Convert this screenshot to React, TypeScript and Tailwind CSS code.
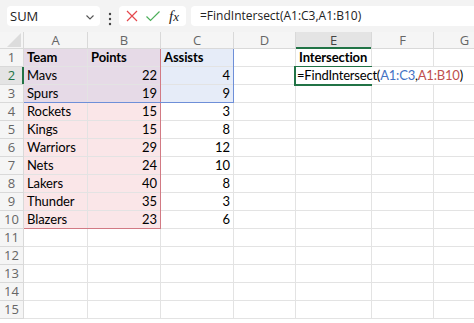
import React from "react";

const colW = [24, 64, 73, 73, 62, 76, 62, 62];
const letters = ["", "A", "B", "C", "D", "E", "F", "G"];

type Cell = { t?: string; right?: boolean; bold?: boolean };

const data: Cell[][] = [
  [{ t: "Team", bold: true }, { t: "Points", bold: true }, { t: "Assists", bold: true }, {}, { t: "Intersection", bold: true }],
  [{ t: "Mavs" }, { t: "22", right: true }, { t: "4", right: true }],
  [{ t: "Spurs" }, { t: "19", right: true }, { t: "9", right: true }],
  [{ t: "Rockets" }, { t: "15", right: true }, { t: "3", right: true }],
  [{ t: "Kings" }, { t: "15", right: true }, { t: "8", right: true }],
  [{ t: "Warriors" }, { t: "29", right: true }, { t: "12", right: true }],
  [{ t: "Nets" }, { t: "24", right: true }, { t: "10", right: true }],
  [{ t: "Lakers" }, { t: "40", right: true }, { t: "8", right: true }],
  [{ t: "Thunder" }, { t: "35", right: true }, { t: "3", right: true }],
  [{ t: "Blazers" }, { t: "23", right: true }, { t: "6", right: true }],
];

function fillFor(r: number, c: number): string {
  if ((c === 1 || c === 2) && r <= 3) return "bg-[#e6dae7]";
  if ((c === 1 || c === 2) && r <= 10) return "bg-[#fae6e8]";
  if (c === 3 && r <= 3) return "bg-[#e6ecf8]";
  return "bg-white";
}

export default function App() {
  const rows = Array.from({ length: 15 }, (_, i) => i + 1);
  return (
    <div className="relative w-[474px] h-[323px] overflow-hidden bg-white font-['Lato',sans-serif] text-black">
      {/* Top formula bar */}
      <div className="flex h-[32px] bg-[#f3f3f3] pt-[6px]">
        <div className="ml-[7px] flex h-[20px] w-[93px] items-center justify-between rounded-[4px] bg-white pl-[3px] pr-[5px]">
          <span className="font-['Open_Sans',sans-serif] text-[13px] leading-none text-[#222]">SUM</span>
          <svg width="10" height="10" viewBox="0 0 10 10" className="mt-[1px]">
            <path d="M1.5 3.5 L5 7 L8.5 3.5" fill="none" stroke="#555" strokeWidth="1.1" />
          </svg>
        </div>
        <div className="flex w-[19px] items-center justify-center">
          <svg width="4" height="14" viewBox="0 0 4 14">
            <circle cx="2" cy="2" r="1.2" fill="#444" />
            <circle cx="2" cy="7" r="1.2" fill="#444" />
            <circle cx="2" cy="12" r="1.2" fill="#444" />
          </svg>
        </div>
        <div className="flex h-[20px] w-[67px] items-center rounded-[4px] bg-white">
          <svg width="14" height="14" viewBox="0 0 14 14" className="ml-[6px]">
            <path d="M2 2 L12 12 M12 2 L2 12" stroke="#e5484d" strokeWidth="1.2" fill="none" />
          </svg>
          <svg width="16" height="14" viewBox="0 0 16 14" className="ml-[6px]">
            <path d="M1.5 7.5 L5.5 11.5 L14.5 2.5" stroke="#4caf5a" strokeWidth="1.2" fill="none" />
          </svg>
          <span className="ml-[8px] font-['Liberation_Serif',serif] text-[15px] italic leading-none text-[#222]">
            f<span className="text-[13px]">x</span>
          </span>
        </div>
        <div className="ml-[5px] flex h-[20px] flex-1 items-center rounded-l-[4px] bg-white pl-[9px]">
          <span className="font-['Open_Sans',sans-serif] text-[12px] leading-none text-[#222]">=FindIntersect(A1:C3,A1:B10)</span>
        </div>
      </div>

      {/* Column headers */}
      <div className="flex h-[17px] bg-[#f5f5f5]">
        {letters.map((l, i) => (
          <div
            key={i}
            style={{ width: colW[i] }}
            className={`relative flex shrink-0 items-center justify-center border-b border-r border-[#d9d9d9] font-['Open_Sans',sans-serif] text-[13px] leading-none ${
              i === 5 ? "bg-[#e4e4e4] text-[#444]" : "text-[#666]"
            }`}
          >
            {i === 0 ? (
              <svg width="14" height="14" viewBox="0 0 14 14" className="absolute bottom-[1px] right-[2px]">
                <path d="M14 0 L14 14 L0 14 Z" fill="#dcdcdc" />
              </svg>
            ) : (
              l
            )}
            {i === 5 && <div className="absolute bottom-[-1px] left-0 right-0 h-[2px] bg-[#217346]" />}
          </div>
        ))}
      </div>

      {/* Rows */}
      {rows.map((r) => (
        <div key={r} className="flex h-[18px]">
          {colW.map((w, c) => {
            if (c === 0) {
              return (
                <div
                  key={c}
                  style={{ width: w }}
                  className={`relative flex shrink-0 items-center justify-center border-b border-r font-['Open_Sans',sans-serif] text-[13px] leading-none ${
                    r === 2
                      ? "border-[#d9d9d9] bg-[#e4e4e4] text-[#217346]"
                      : "border-[#d9d9d9] bg-[#f5f5f5] text-[#666]"
                  }`}
                >
                  {r}
                  {r === 2 && <div className="absolute bottom-0 right-[-1px] top-0 w-[2px] bg-[#217346]" />}
                </div>
              );
            }
            const cell = r <= 10 ? data[r - 1][c - 1] : undefined;
            return (
              <div
                key={c}
                style={{ width: w }}
                className={`flex shrink-0 items-center overflow-visible whitespace-nowrap border-b border-r border-[#e3e3e3] px-[3px] text-[13px] leading-none tracking-[-0.1px] ${fillFor(
                  r,
                  c
                )} ${cell?.right ? "justify-end" : "justify-start"} ${cell?.bold ? "font-bold" : ""}`}
              >
                {cell?.t}
              </div>
            );
          })}
        </div>
      ))}

      {/* Range outlines */}
      <div className="pointer-events-none absolute left-[24px] top-[49px] h-[180px] w-[137px] border-b border-r border-[#d27a84]" />
      <div className="pointer-events-none absolute left-[24px] top-[49px] h-[54px] w-[210px] border-b border-r border-[#6e8fd8]" />

      {/* Active editing cell E2 */}
      <div className="absolute left-[294px] top-[66px] h-[20px] w-[78px] border-2 border-r-0 border-[#217346]" />
      <div className="absolute left-[296px] top-[67px] flex h-[17px] items-center whitespace-nowrap bg-white pl-[1px] pr-[2px] text-[13px] leading-none tracking-[-0.2px]">
        <span>=FindIntersect(</span>
        <span className="text-[#4472c4]">A1:C3</span>
        <span>,</span>
        <span className="text-[#c0504d]">A1:B10</span>
        <span>)</span>
      </div>
    </div>
  );
}
